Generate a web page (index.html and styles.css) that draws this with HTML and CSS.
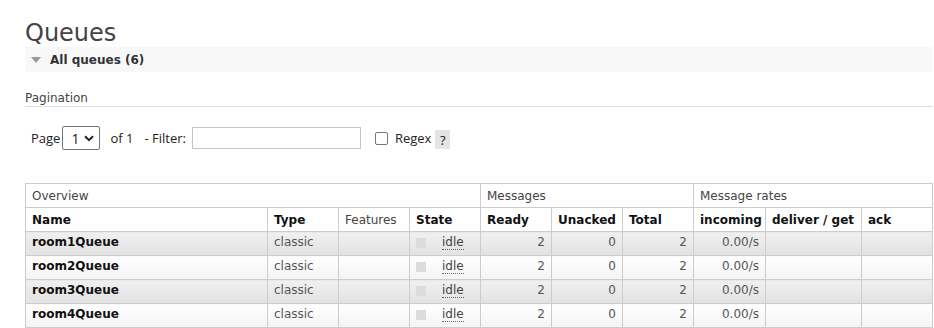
FILE: index.html
```html
<!DOCTYPE html>
<html>
<head>
<meta charset="utf-8">
<link rel="stylesheet" href="styles.css">
</head>
<body>
<div class="page">
  <h1 class="title">Queues</h1>
  <div class="section-head"><span class="tri"></span>All queues (6)</div>
  <h3 class="sub">Pagination</h3>
  <div class="pager">
    <label class="lbl">Page</label>
    <div class="select"><span>1</span><svg width="10" height="7" viewBox="0 0 10 7"><path d="M1 1.2 L5 5.2 L9 1.2" fill="none" stroke="#222" stroke-width="2"/></svg></div>
    <span class="lbl of">of 1</span>
    <span class="lbl">- Filter:</span>
    <div class="input"></div>
    <div class="check"></div>
    <span class="lbl">Regex</span>
    <span class="help">?</span>
  </div>
  <table class="list">
    <colgroup>
      <col class="c-name"><col class="c-s"><col class="c-s"><col class="c-s"><col class="c-s"><col class="c-s"><col class="c-s"><col class="c-inc"><col class="c-del"><col class="c-s">
    </colgroup>
    <tr class="group"><th colspan="4">Overview</th><th colspan="3">Messages</th><th colspan="3">Message rates</th></tr>
    <tr class="heads"><th>Name</th><th>Type</th><th class="light">Features</th><th>State</th><th>Ready</th><th>Unacked</th><th>Total</th><th>incoming</th><th>deliver / get</th><th>ack</th></tr>
    <tr class="alt1"><td class="name">room1Queue</td><td>classic</td><td></td><td><span class="st"><span class="sq"></span><abbr>idle</abbr></span></td><td class="r">2</td><td class="r">0</td><td class="r">2</td><td class="r">0.00/s</td><td></td><td></td></tr>
    <tr class="alt2"><td class="name">room2Queue</td><td>classic</td><td></td><td><span class="st"><span class="sq"></span><abbr>idle</abbr></span></td><td class="r">2</td><td class="r">0</td><td class="r">2</td><td class="r">0.00/s</td><td></td><td></td></tr>
    <tr class="alt1"><td class="name">room3Queue</td><td>classic</td><td></td><td><span class="st"><span class="sq"></span><abbr>idle</abbr></span></td><td class="r">2</td><td class="r">0</td><td class="r">2</td><td class="r">0.00/s</td><td></td><td></td></tr>
    <tr class="alt2"><td class="name">room4Queue</td><td>classic</td><td></td><td><span class="st"><span class="sq"></span><abbr>idle</abbr></span></td><td class="r">2</td><td class="r">0</td><td class="r">2</td><td class="r">0.00/s</td><td></td><td></td></tr>
  </table>
</div>
</body>
</html>
```
FILE: styles.css
```css
html, body { margin: 0; padding: 0; background: #fff; }
body { font-family: "DejaVu Sans", Verdana, sans-serif; font-size: 12px; color: #444; }
.page { padding: 0 1px 0 25px; }
.title { margin: 19px 0 0; font-size: 24px; line-height: 28px; font-weight: normal; color: #444; }
.section-head {
  height: 25px; background: #f8f8f8; display: flex; align-items: center;
  font-weight: bold; color: #333; padding-left: 6px;
}
.tri { width: 0; height: 0; border-left: 5px solid transparent; border-right: 5px solid transparent; border-top: 6px solid #999; margin-right: 9px; margin-top: 1px; }
.sub { margin: 18px 0 0; font-size: 12px; font-weight: normal; line-height: 16px; border-bottom: 1px solid #ddd; color: #444; }
.pager { display: flex; align-items: center; margin-top: 19px; padding-left: 6px; height: 24px; font-family: "Open Sans", "Noto Sans", sans-serif; font-size: 13px; color: #222; }
.lbl { white-space: nowrap; }
.select { box-sizing: border-box; width: 38px; height: 24px; border: 1px solid #767676; border-radius: 2px; margin-left: 2px; display: flex; align-items: center; justify-content: space-between; padding: 0 5px 0 8px; font-size: 14px; }
.of { margin-left: 10px; margin-right: 11px; }
.input { box-sizing: border-box; width: 169px; height: 22px; border: 1px solid #c4c4c4; margin-left: 6px; }
.check { box-sizing: border-box; width: 13px; height: 13px; border: 1px solid #767676; border-radius: 2px; margin-left: 14px; margin-right: 7px; }
.help { background: #e4e4e4; width: 15px; height: 19px; display: inline-flex; align-items: center; justify-content: center; margin-left: 4px; margin-top: 3px; }
.list { margin-top: 33px; border-collapse: collapse; table-layout: fixed; width: 908px; }
.list th, .list td { border: 1px solid #ccc; height: 23px; padding: 0 6px; text-align: left; white-space: nowrap; overflow: hidden; font-size: 12px; }
.list td { padding-bottom: 3px; height: 20px; }
.c-name { width: 242px; }
.c-s { width: 71px; }
.c-inc { width: 72px; }
.c-del { width: 96px; }
.group th { font-weight: normal; color: #444; background: #fff; }
.heads th { font-weight: bold; color: #111; background: #fff; }
.heads th.light { font-weight: normal; color: #444; }
.list td { color: #555; }
.list td.name { font-weight: bold; color: #111; }
.list td.r { text-align: right; }
.alt1 td { background: linear-gradient(#f0f0f0, #e2e2e2); }
.alt2 td { background: linear-gradient(#ffffff, #f4f4f4); }
.st { display: flex; align-items: center; }
.sq { width: 10px; height: 10px; background: #dcdcdc; margin-left: 0; margin-right: 16px; margin-top: 2px; }
abbr { text-decoration: none; border-bottom: 1px dotted #666; color: #444; line-height: 14px; }
```
